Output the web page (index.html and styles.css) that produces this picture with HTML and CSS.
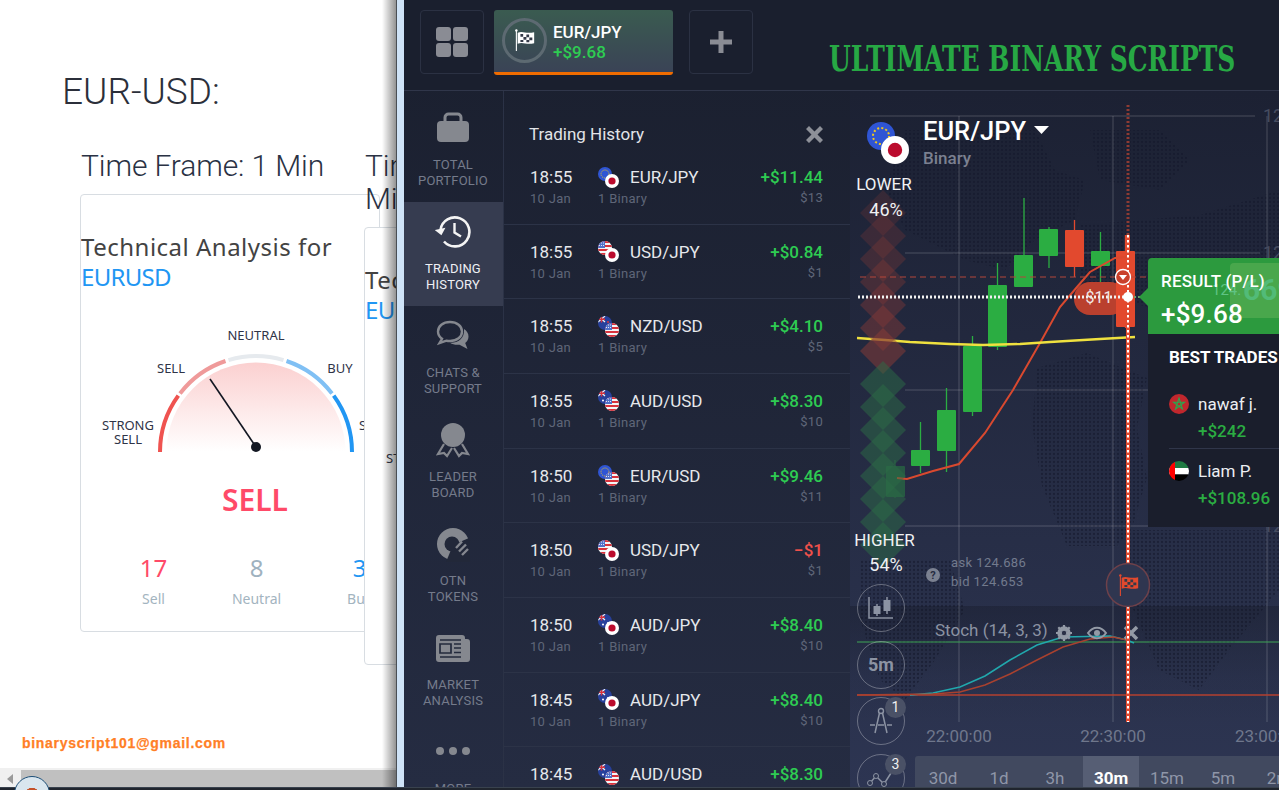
FILE: index.html
```html
<!DOCTYPE html>
<html lang="en">
<head>
<meta charset="utf-8">
<title>Ultimate Binary Scripts</title>
<link rel="stylesheet" href="styles.css">
</head>
<body>
<svg class="defs" width="0" height="0" aria-hidden="true">
  <defs>
    <clipPath id="c14"><circle cx="7" cy="7" r="7"/></clipPath>
    <symbol id="f-eu" viewBox="0 0 14 14"><circle cx="7" cy="7" r="7" fill="#2f55d4"/><circle cx="7" cy="7" r="4" fill="none" stroke="#f2c91d" stroke-width="1" stroke-dasharray="1 1.1"/></symbol>
    <symbol id="f-jp" viewBox="0 0 14 14"><circle cx="7" cy="7" r="7" fill="#fff"/><circle cx="7" cy="7" r="3.6" fill="#bb0b2d"/></symbol>
    <symbol id="f-us" viewBox="0 0 14 14"><g clip-path="url(#c14)"><rect width="14" height="14" fill="#f5f5f5"/><path d="M0 1h14M0 5h14M0 9h14M0 13h14" stroke="#d8323c" stroke-width="2"/><rect width="7" height="7" fill="#5170c8"/><path d="M1 2h5M1 4.500h5" stroke="#dfe6fa" stroke-width="1" stroke-dasharray="1 1"/></g></symbol>
    <symbol id="f-au" viewBox="0 0 14 14"><g clip-path="url(#c14)"><rect width="14" height="14" fill="#27409c"/><path d="M0 0l7 6M7 0L0 6" stroke="#f2f2f2" stroke-width="1.300"/><path d="M3.500 0v6.500M0 3.200h7" stroke="#d8323c" stroke-width="1.400"/><circle cx="10" cy="9" r="1" fill="#fff"/><circle cx="5" cy="10.500" r="1" fill="#fff"/></g></symbol>
    <symbol id="f-nz" viewBox="0 0 14 14"><g clip-path="url(#c14)"><rect width="14" height="14" fill="#27409c"/><path d="M0 0l7 6M7 0L0 6" stroke="#f2f2f2" stroke-width="1.300"/><path d="M3.500 0v6.500M0 3.200h7" stroke="#d8323c" stroke-width="1.400"/><circle cx="10" cy="6" r="1" fill="#d8323c"/><circle cx="11" cy="10" r="1" fill="#d8323c"/></g></symbol>
    <symbol id="flag" viewBox="0 0 24 24">
      <rect x="2" y="1" width="1.200" height="23" fill="currentColor"/>
      <circle cx="2.600" cy="1.500" r="1.300" fill="currentColor"/>
      <path d="M4 4c6-2.500 8 1.500 18-.5v12c-9 2-12-2-18 .5z" fill="currentColor"/>
      <path d="M7 5.500h3v3H7zM13.500 6h3v3h-3zM10.300 8.700h3.200v3h-3.200zM16.700 9.300H20v3h-3.300zM7 12h3.200v2.200H7zM13.500 12h3.200v2.400h-3.200z" fill="#343a48"/>
    </symbol>
    <pattern id="dots" width="4" height="4" patternUnits="userSpaceOnUse"><circle cx="2" cy="2" r="1.150" fill="#12162a"/></pattern>
    <linearGradient id="dome" x1="0" y1="0" x2="0" y2="1"><stop offset="0" stop-color="#fbd0d0"/><stop offset="1" stop-color="#fff"/></linearGradient>
    <linearGradient id="stochBand" x1="0" y1="0" x2="0" y2="1"><stop offset="0" stop-color="#11141f" stop-opacity=".32"/><stop offset=".6" stop-color="#11141f" stop-opacity=".06"/><stop offset="1" stop-color="#11141f" stop-opacity="0"/></linearGradient>
  </defs>
</svg>

<div class="desk">
  <section class="site">
    <h1 class="site-title">EUR-USD:</h1>
    <div class="cols">
      <div class="col col-a">
        <h2 class="frame-title">Time Frame: 1 Min</h2>
        <div class="card">
          <h3 class="card-title">Technical Analysis for <span class="sym">EURUSD</span></h3>
          <svg class="gauge" viewBox="0 0 284 180" width="284" height="180">
            <text class="g-lab" x="175" y="23">NEUTRAL</text>
            <text class="g-lab" x="90" y="56">SELL</text>
            <text class="g-lab" x="259" y="56">BUY</text>
            <text class="g-lab" x="47" y="113">STRONG</text>
            <text class="g-lab" x="47" y="127">SELL</text>
            <text class="g-lab" x="304" y="113">STRONG</text>
            <path class="g-dome" d="M85.500 135a89.500 89.500 0 0 1 179 0z"/>
            <path class="g-arc a1" d="M79 135A96 96 0 0 1 97.300 78.600"/>
            <path class="g-arc a2" d="M99 76.500A96 96 0 0 1 144.500 44"/>
            <path class="g-arc a3" d="M147.500 43.200A96 96 0 0 1 202.500 43.200"/>
            <path class="g-arc a4" d="M205.500 44A96 96 0 0 1 251 76.500"/>
            <path class="g-arc a5" d="M252.700 78.600A96 96 0 0 1 271 135"/>
            <line class="g-needle" x1="175" y1="130" x2="129" y2="62"/>
            <circle class="g-pin" cx="175" cy="130" r="5"/>
          </svg>
          <div class="verdict">SELL</div>
          <div class="tallies">
            <div class="tally"><b class="t-red">17</b><span>Sell</span></div>
            <div class="tally"><b class="t-gray">8</b><span>Neutral</span></div>
            <div class="tally"><b class="t-blue">3</b><span>Buy</span></div>
          </div>
        </div>
      </div>
      <div class="col col-b">
        <h2 class="frame-title">Time Frame: 15 Min</h2>
        <div class="card">
          <h3 class="card-title">Technical Analysis for <span class="sym">EURUSD</span></h3>
          <svg class="gauge" viewBox="0 0 284 180" width="284" height="180">
            <text class="g-lab" x="47" y="113">STRONG</text>
            <text class="g-lab" x="47" y="127">SELL</text>
          </svg>
        </div>
      </div>
    </div>
    <div class="mail">binaryscript101@gmail.com</div>
    <div class="hscroll"><span class="arrow"></span><span class="thumb"></span></div>
  </section>

  <div class="seam"></div>

  <main class="app">
    <header class="topbar">
      <button class="tbtn" aria-label="Layouts">
        <svg width="32" height="30" viewBox="0 0 32 30"><rect x="0" y="0" width="15" height="14" rx="3"/><rect x="17" y="0" width="15" height="14" rx="3"/><rect x="0" y="16" width="15" height="14" rx="3"/><rect x="17" y="16" width="15" height="14" rx="3"/></svg>
      </button>
      <div class="tab">
        <span class="tab-ring"><svg class="tab-flag" width="22" height="22"><use href="#flag"/></svg></span>
        <div class="tab-text"><strong>EUR/JPY</strong><em>+$9.68</em></div>
      </div>
      <button class="tbtn" aria-label="Add">
        <svg width="22" height="22" viewBox="0 0 22 22"><path d="M8.500 0h5v8.500H22v5h-8.500V22h-5v-8.500H0v-5h8.500z"/></svg>
      </button>
      <div class="brand">Ultimate Binary Scripts</div>
    </header>

    <div class="workspace">
      <nav class="rail">
        <a class="rail-item">
          <svg width="34" height="32" viewBox="0 0 34 32"><path d="M9 10V5.500A3.500 3.500 0 0 1 12.500 2h9A3.500 3.500 0 0 1 25 5.500V10" fill="none" stroke="currentColor" stroke-width="3"/><rect x="1" y="9" width="32" height="21" rx="4" fill="currentColor"/></svg>
          <span>Total Portfolio</span>
        </a>
        <a class="rail-item on">
          <svg width="36" height="34" viewBox="0 0 36 34"><path d="M5.500 15A14.500 14.500 0 1 1 9 26.500" fill="none" stroke="currentColor" stroke-width="2.600"/><path d="M0 14h11l-5.500 6.500z" fill="currentColor" transform="rotate(-12 5 16)"/><path d="M19.500 8v9.500l6.500 4" fill="none" stroke="currentColor" stroke-width="2.400"/></svg>
          <span>Trading History</span>
        </a>
        <a class="rail-item">
          <svg width="34" height="32" viewBox="0 0 34 32"><path d="M14 2C7 2 2 6 2 11.500c0 3 1.500 5.500 4 7.300L3.500 23l7-2.300c1 .2 2.300.3 3.500.3 7 0 12-4 12-9.500S21 2 14 2z" fill="none" stroke="currentColor" stroke-width="2.400"/><path d="M28 9c3 2 4.500 4.500 4.500 7.500 0 2.800-1.300 5-3.300 6.500l2.300 6-8-4.300c-3.500.5-7-.3-9.500-2 7 .5 15-3.500 14-13.700z" fill="currentColor"/></svg>
          <span>Chats &amp; Support</span>
        </a>
        <a class="rail-item">
          <svg width="34" height="34" viewBox="0 0 34 34"><circle cx="17" cy="12" r="12" fill="currentColor"/><path d="M8 21l-6 10 6-1 3 3 5-8M26 21l6 10-6-1-3 3-5-8" fill="none" stroke="currentColor" stroke-width="2.200"/></svg>
          <span>Leader Board</span>
        </a>
        <a class="rail-item">
          <svg width="34" height="34" viewBox="0 0 34 34"><circle cx="17" cy="17" r="16" fill="currentColor"/><path d="M17 18L35 10V35H10z" fill="#222839"/><circle cx="16" cy="17" r="7.500" fill="#222839"/><path d="M20 21l6-6.500M23 24.500l7-7M26 28l6-6" stroke="currentColor" stroke-width="2.400"/></svg>
          <span>OTN Tokens</span>
        </a>
        <a class="rail-item">
          <svg width="34" height="28" viewBox="0 0 34 28"><path d="M3 1h23a3 3 0 0 1 3 3v1h2a3 3 0 0 1 3 3v17a3 3 0 0 1-3 3H3a3 3 0 0 1-3-3V4a3 3 0 0 1 3-3z" fill="currentColor"/><path d="M4 6h21M4 10h11v9H4zM18 10h7M18 14h7M18 18.500h7M4 23h21" fill="none" stroke="#232a3d" stroke-width="1.700"/></svg>
          <span>Market Analysis</span>
        </a>
        <a class="rail-item">
          <svg width="34" height="8" viewBox="0 0 34 8" class="more-dots"><circle cx="4" cy="4" r="4" fill="currentColor"/><circle cx="17" cy="4" r="4" fill="currentColor"/><circle cx="30" cy="4" r="4" fill="currentColor"/></svg>
          <span>More</span>
        </a>
      </nav>

      <aside class="history">
        <div class="hist-head"><span>Trading History</span>
          <svg width="17" height="17" viewBox="0 0 17 17"><path d="M3 0l5.500 5.500L14 0l3 3-5.500 5.500L17 14l-3 3-5.500-5.500L3 17l-3-3 5.500-5.500L0 3z" fill="#8d9098"/></svg>
        </div>
        <div class="row"><div class="r-time"><b>18:55</b><small>10 Jan</small></div><div class="r-pair"><div class="r-name"><svg class="pairflag" viewBox="0 0 21 21"><use href="#f-eu" width="14" height="14"/><use href="#f-jp" x="7" y="7" width="14" height="14"/></svg><b>EUR/JPY</b></div><small>1 Binary</small></div><div class="r-amt"><b class="up">+$11.44</b><small>$13</small></div></div>
        <div class="row"><div class="r-time"><b>18:55</b><small>10 Jan</small></div><div class="r-pair"><div class="r-name"><svg class="pairflag" viewBox="0 0 21 21"><use href="#f-us" width="14" height="14"/><use href="#f-jp" x="7" y="7" width="14" height="14"/></svg><b>USD/JPY</b></div><small>1 Binary</small></div><div class="r-amt"><b class="up">+$0.84</b><small>$1</small></div></div>
        <div class="row"><div class="r-time"><b>18:55</b><small>10 Jan</small></div><div class="r-pair"><div class="r-name"><svg class="pairflag" viewBox="0 0 21 21"><use href="#f-nz" width="14" height="14"/><use href="#f-us" x="7" y="7" width="14" height="14"/></svg><b>NZD/USD</b></div><small>1 Binary</small></div><div class="r-amt"><b class="up">+$4.10</b><small>$5</small></div></div>
        <div class="row"><div class="r-time"><b>18:55</b><small>10 Jan</small></div><div class="r-pair"><div class="r-name"><svg class="pairflag" viewBox="0 0 21 21"><use href="#f-au" width="14" height="14"/><use href="#f-us" x="7" y="7" width="14" height="14"/></svg><b>AUD/USD</b></div><small>1 Binary</small></div><div class="r-amt"><b class="up">+$8.30</b><small>$10</small></div></div>
        <div class="row"><div class="r-time"><b>18:50</b><small>10 Jan</small></div><div class="r-pair"><div class="r-name"><svg class="pairflag" viewBox="0 0 21 21"><use href="#f-eu" width="14" height="14"/><use href="#f-us" x="7" y="7" width="14" height="14"/></svg><b>EUR/USD</b></div><small>1 Binary</small></div><div class="r-amt"><b class="up">+$9.46</b><small>$11</small></div></div>
        <div class="row"><div class="r-time"><b>18:50</b><small>10 Jan</small></div><div class="r-pair"><div class="r-name"><svg class="pairflag" viewBox="0 0 21 21"><use href="#f-us" width="14" height="14"/><use href="#f-jp" x="7" y="7" width="14" height="14"/></svg><b>USD/JPY</b></div><small>1 Binary</small></div><div class="r-amt"><b class="down">&minus;$1</b><small>$1</small></div></div>
        <div class="row"><div class="r-time"><b>18:50</b><small>10 Jan</small></div><div class="r-pair"><div class="r-name"><svg class="pairflag" viewBox="0 0 21 21"><use href="#f-au" width="14" height="14"/><use href="#f-jp" x="7" y="7" width="14" height="14"/></svg><b>AUD/JPY</b></div><small>1 Binary</small></div><div class="r-amt"><b class="up">+$8.40</b><small>$10</small></div></div>
        <div class="row"><div class="r-time"><b>18:45</b><small>10 Jan</small></div><div class="r-pair"><div class="r-name"><svg class="pairflag" viewBox="0 0 21 21"><use href="#f-au" width="14" height="14"/><use href="#f-jp" x="7" y="7" width="14" height="14"/></svg><b>AUD/JPY</b></div><small>1 Binary</small></div><div class="r-amt"><b class="up">+$8.40</b><small>$10</small></div></div>
        <div class="row"><div class="r-time"><b>18:45</b><small>10 Jan</small></div><div class="r-pair"><div class="r-name"><svg class="pairflag" viewBox="0 0 21 21"><use href="#f-au" width="14" height="14"/><use href="#f-us" x="7" y="7" width="14" height="14"/></svg><b>AUD/USD</b></div><small>1 Binary</small></div><div class="r-amt"><b class="up">+$8.30</b><small>$10</small></div></div>
      </aside>

      <section class="chart">
        <svg class="plot" viewBox="850 91 429 699" width="429" height="699">
          <!-- world map -->
          <path class="map" fill="url(#dots)" d="M905 130h130l20 40 30 10-10 40-40 20-30 30-40-10-60-30-20-40zM1090 130h70l30 30-30 30-60-10zM1080 225l120-10 80-25v130l-60 10-60-20-80-20zM1037 368l50-15 60 25-10 50 10 50-15 50-15 18h-50l-25-60-10-60zM1130 530h149v60l-50 60-30 40-40-20-30-70zM860 560h90l15 50-30 50-30 40-25-20-20-60z"/>
          <rect x="850" y="606" width="429" height="120" fill="url(#stochBand)"/>
          <!-- grid -->
          <path class="grid" d="M870 116h385M959 116v606M1113 116v606M1267 116v606M905 253h355M905 390h355M905 526h370"/>
          <text class="axis" x="1263" y="122">12</text>
          <text class="axis" x="1263" y="259">12</text>
          <text class="axis" x="1263" y="396">12</text>
          <text class="axis" x="1263" y="532">12</text>
          <!-- candles -->
          <g class="up-c">
            <g class="dim"><path d="M895 460v38"/><rect x="886" y="466" width="19" height="31" rx="1"/></g>
            <path d="M920.500 422v51M946.500 388v84M972.500 336v80M997.500 263v87M1024 198v60M1049 227v41M1100.500 232v50"/>
            <rect x="911" y="450" width="19" height="16" rx="1"/>
            <rect x="937" y="410" width="19" height="41" rx="1"/>
            <rect x="963" y="346" width="19" height="66" rx="1"/>
            <rect x="988" y="285" width="19" height="62" rx="1"/>
            <rect x="1014" y="255" width="19" height="32" rx="1"/>
            <rect x="1039" y="229" width="19" height="27" rx="1"/>
            <rect x="1091" y="251" width="19" height="15" rx="1"/>
          </g>
          <rect class="bubble" x="1074" y="282" width="52" height="33" rx="16"/>
          <g class="down-c">
            <path d="M1074.500 220v57M1125.500 235v93"/>
            <rect x="1065" y="230" width="19" height="37" rx="1"/>
            <rect x="1116" y="251" width="19" height="76" rx="1"/>
          </g>
          <polyline class="ma-red" points="897,478 907,479 933,471 959,464 985,433 1013,390 1040,343 1060,307 1077,287 1090,272 1115,258 1127,257"/>
          <polyline class="ma-yel" points="857,338 885,340 910,342 950,344 983,345 1020,344 1050,342 1100,339 1135,337"/>
          <!-- sentiment diamonds -->
          <g class="dia-red">
            <path style="opacity:.22" d="M883 190l23 23-23 23-23-23z"/><path style="opacity:.26" d="M883 213l23 23-23 23-23-23z"/><path style="opacity:.3" d="M883 236l23 23-23 23-23-23z"/><path style="opacity:.34" d="M883 259l23 23-23 23-23-23z"/><path style="opacity:.38" d="M883 282l23 23-23 23-23-23z"/><path style="opacity:.44" d="M883 305l23 23-23 23-23-23z"/><path style="opacity:.5" d="M883 328l23 23-23 23-23-23z"/>
          </g>
          <g class="dia-green">
            <path d="M883 361l23 23-23 23-23-23z"/><path d="M883 384l23 23-23 23-23-23z"/><path d="M883 407l23 23-23 23-23-23z"/><path d="M883 430l23 23-23 23-23-23z"/><path d="M883 453l23 23-23 23-23-23z"/><path d="M883 476l23 23-23 23-23-23z"/><path d="M883 499l23 23-23 23-23-23z"/><path d="M883 522l23 23-23 23-23-23z"/>
          </g>
          <path class="dash-red" d="M860 277h288"/>
          <path class="dots-w-faint" d="M1130 297h20"/>
          <path class="dots-w" d="M858 297h270"/>
          <!-- expiry line -->
          <path class="exp-top" d="M1128 105v130"/>
          <path class="exp-red" d="M1128 235v487"/>
          <path class="exp-white" d="M1128 235v487"/>
          <circle class="mark" cx="1123" cy="277" r="7.500"/>
          <path fill="#fff" d="M1119 275h8l-4 5z"/>
          <circle cx="1128" cy="297" r="5" fill="#fff"/>
          <text class="bubble-t" x="1099" y="303">$11</text>
          <!-- labels -->
          <text class="pct-l" x="884" y="190">LOWER</text>
          <text class="pct-v" x="886" y="216">46%</text>
          <text class="pct-l" x="884.500" y="546">HIGHER</text>
          <text class="pct-v" x="886" y="571">54%</text>
          <text class="pair-t" x="923" y="140">EUR/JPY</text>
          <path fill="#fff" d="M1034 126h15l-7.500 8z"/>
          <text class="pair-s" x="923" y="164">Binary</text>
          <use href="#f-eu" x="867" y="122" width="28" height="28"/>
          <use href="#f-jp" x="881" y="136" width="28" height="28"/>
          <circle cx="933" cy="575" r="7" fill="#7b8191"/>
          <text class="q" x="933" y="579">?</text>
          <text class="ask" x="951" y="567">ask 124.686</text>
          <text class="ask" x="951" y="586">bid 124.653</text>
          <!-- stochastic -->
          <path class="lvl-g" d="M857 642h422"/>
          <path class="lvl-r" d="M857 695h422"/>
          <polyline class="st-teal" points="910,695 933,693 960,687 985,676 1010,660 1037,645 1063,637 1110,636 1127,640 1134,643"/>
          <polyline class="st-red" points="857,695 933,694 960,692 985,685 1010,674 1037,660 1063,647 1090,639 1113,637 1127,640"/>
          <text class="st-t" x="935" y="636">Stoch (14, 3, 3)</text>
          <g class="st-ic">
            <circle cx="1064" cy="633" r="5" fill="none" stroke="#939aa6" stroke-width="3.500"/>
            <path d="M1064 625v16M1056 633h16M1058.300 627.300l11.400 11.400M1069.700 627.300l-11.400 11.400" stroke="#939aa6" stroke-width="2.200"/>
            <circle cx="1064" cy="633" r="2.200" fill="#2a3046"/>
            <path d="M1088 633c5-7 13-7 18 0-5 7-13 7-18 0z" fill="none" stroke="#939aa6" stroke-width="2"/>
            <circle cx="1097" cy="633" r="3" fill="#939aa6"/>
            <path d="M1125 627l12 12M1137 627l-12 12" stroke="#939aa6" stroke-width="3.500"/>
          </g>
          <path class="exp-red" d="M1128 606v116"/>
          <path class="exp-white" d="M1128 606v116"/>
          <circle class="flagball" cx="1128" cy="585" r="21.500"/>
          <use href="#flag" class="redflag" x="1118" y="574" width="22" height="22"/>
          <text class="tick" x="959" y="742">22:00:00</text>
          <text class="tick" x="1113" y="742">22:30:00</text>
          <text class="tick tick-s" x="1235" y="742">23:00:00</text>
        </svg>

        <div class="tools">
          <button class="tool" aria-label="Chart type"><svg width="26" height="24" viewBox="0 0 26 24"><path d="M1 1v21h24" fill="none" stroke="currentColor" stroke-width="1.500"/><path d="M9 8v12M19 1v17" stroke="currentColor" stroke-width="1.500"/><rect x="5.500" y="10" width="7" height="8" fill="currentColor"/><rect x="15.500" y="4" width="7" height="11" fill="currentColor"/></svg></button>
          <button class="tool tool-t">5m</button>
          <button class="tool" aria-label="Tools"><svg width="22" height="28" viewBox="0 0 22 28"><circle cx="11" cy="4" r="2.500" fill="none" stroke="currentColor" stroke-width="1.400"/><path d="M9.500 6L5 26M12.500 6L17 26M0 18h5M8 18h6M17 18h5" fill="none" stroke="currentColor" stroke-width="1.500"/></svg><span class="badge">1</span></button>
          <button class="tool" aria-label="Indicators"><svg width="28" height="20" viewBox="0 0 28 20"><path d="M3 15l6-7 8 8 7-11" fill="none" stroke="currentColor" stroke-width="1.500"/><circle cx="3" cy="15" r="2.500" fill="#2d3550" stroke="currentColor"/><circle cx="9" cy="8" r="2.500" fill="#2d3550" stroke="currentColor"/><circle cx="17" cy="16" r="2.500" fill="#2d3550" stroke="currentColor"/></svg><span class="badge">3</span></button>
        </div>

        <div class="side-card">
          <div class="result">
            <span class="result-tip"></span>
            <div class="ghost"><span class="g1">124.</span><span class="g2">669</span></div>
            <div class="r-lab">RESULT (P/L)</div>
            <div class="r-val">+$9.68</div>
          </div>
          <div class="best">
            <div class="best-h">BEST TRADES</div>
            <div class="trader">
              <div class="trader-top"><svg width="20" height="20" viewBox="0 0 20 20"><circle cx="10" cy="10" r="10" fill="#c1272d"/><path d="M10 4l3.500 11L4.500 8.200h11L6.500 15z" fill="none" stroke="#2aa84f" stroke-width="1.100"/></svg><span>nawaf j.</span></div>
              <b>+$242</b>
            </div>
            <div class="trader">
              <div class="trader-top"><svg width="20" height="20" viewBox="0 0 20 20"><defs><clipPath id="cu"><circle cx="10" cy="10" r="10"/></clipPath></defs><g clip-path="url(#cu)"><rect width="20" height="7" fill="#1f7a43"/><rect y="7" width="20" height="6.500" fill="#fff"/><rect y="13.500" width="20" height="6.500" fill="#000"/><rect width="6" height="20" fill="#f00"/></g></svg><span>Liam P.</span></div>
              <b>+$108.96</b>
            </div>
          </div>
        </div>

        <div class="frames">
          <span>30d</span><span>1d</span><span>3h</span><span class="cur">30m</span><span>15m</span><span>5m</span><span>2m</span>
        </div>
      </section>
    </div>
  </main>
</div>
<footer class="taskbar"><span class="orb"></span></footer>
</body>
</html>
```

FILE: styles.css
```css
* { box-sizing: border-box; }
html, body { margin: 0; height: 100%; overflow: hidden; }
body { display: flex; flex-direction: column; background: #1a2030; font-family: Roboto, "Liberation Sans", sans-serif; }
.defs { position: absolute; }
button { font: inherit; padding: 0; background: none; color: inherit; }

.desk { flex: 1; min-height: 0; display: flex; }
.taskbar { height: 3px; background: #20252e; border-top: 1px solid #39424e; position: relative; }
.orb { position: absolute; left: 14px; top: -12px; width: 36px; height: 36px; border-radius: 50%; background: radial-gradient(circle at 50% 55%, #c4512a 0 30%, #d9e6ef 32% 100%); border: 1px solid #1d4f78; }

/* left: web page */
.site { width: 396px; flex: none; background: #fff; position: relative; overflow: hidden; display: flex; flex-direction: column; }
.site::after { content: ""; position: absolute; right: 0; top: 0; bottom: 0; width: 14px; background: linear-gradient(to right, rgba(0,0,0,0), rgba(0,0,0,.42)); pointer-events: none; }
.site-title { margin: 71px 0 0 62px; font: 300 37px/42px Roboto, sans-serif; color: #2b2f3a; white-space: nowrap; }
.cols { display: flex; margin: 36px 0 0 80px; align-items: flex-start; }
.col { flex: none; }
.col-a { width: 284px; }
.col-b { width: 250px; position: relative; }
.frame-title { margin: 0 0 0 1px; font: 300 30px/33px Roboto, sans-serif; letter-spacing: -.12px; color: #2a3244; }
.col-a .frame-title { white-space: nowrap; }
.frame-title + .card { margin-top: 12px; }
.card { border: 1px solid #d8dde2; border-radius: 4px; background: #fff; height: 438px; width: 300px; padding-top: 37px; }
.col-b .card { width: 284px; }
.card-title { margin: 0; font: 400 24px/30px "Noto Sans", sans-serif; letter-spacing: .5px; color: #434343; width: 280px; }
.sym { color: #2196f3; display: inline-block; letter-spacing: -.7px; }
.gauge { display: block; overflow: visible; margin-top: 25px; }
.g-lab { font: 400 13px "Noto Sans", sans-serif; fill: #2f3447; text-anchor: middle; }
.g-dome { fill: url(#dome); }
.g-arc { fill: none; stroke-width: 4; }
.a1 { stroke: #ef5350; } .a2 { stroke: #ef9a9a; } .a3 { stroke: #e6eaee; } .a4 { stroke: #80c0f4; } .a5 { stroke: #2196f3; }
.g-needle { stroke: #131722; stroke-width: 1.600; }
.g-pin { fill: #131722; }
.verdict { margin-top: -14px; width: 348px; text-align: center; font: 600 30px/34px "Noto Sans", sans-serif; color: #ff4a68; }
.tallies { position: relative; margin-top: 36px; display: flex; padding-left: 21px; width: 340px; }
.tally { width: 103px; flex: none; text-align: center; display: flex; flex-direction: column; gap: 6px; }
.tally b { font: 400 24px/30px "Noto Sans", sans-serif; }
.tally span { font: 400 14px/20px "Noto Sans", sans-serif; color: #a3b4c0; }
.t-red { color: #ff4a68; } .t-gray { color: #9fb2bf; } .t-blue { color: #2196f3; }
.col-a .card { overflow: hidden; }
.mail { margin: auto 0 15px 22px; font: 700 14px/20px "Liberation Sans", sans-serif; letter-spacing: .7px; color: #ff7f27; -webkit-text-stroke: .25px #ff7f27; }
.hscroll { height: 19px; flex: none; display: flex; background: #f0f0f0; padding-top: 2px; }
.arrow { width: 21px; position: relative; }
.arrow::before { content: ""; position: absolute; left: 7px; top: 4px; border: 5px solid transparent; border-right: 6px solid #9a9a9a; border-left: 0; }
.thumb { flex: 1; background: #c0c0c0; }

.seam { width: 8px; flex: none; background: linear-gradient(to right, #4a4f55 0 1px, #cfe3f7 1px 100%); }

/* right: trading app */
.app { flex: 1; min-width: 0; display: flex; flex-direction: column; background: linear-gradient(#1a1f2e, #252c42); color: #fff; }
.topbar { height: 91px; flex: none; display: flex; align-items: flex-start; padding: 10px 0 0 16px; border-bottom: 1px solid #30364a; background: #1a1f2e; }
.tbtn { width: 64px; height: 64px; flex: none; border: 1px solid #2b3143; border-radius: 4px; display: flex; align-items: center; justify-content: center; fill: #8a8c94; }
.tab { width: 179px; height: 65px; margin: 0 16px 0 10px; flex: none; border-radius: 3px; border-bottom: 3px solid #f06c00; background: linear-gradient(#3a5b50, #3a4356); display: flex; align-items: center; padding: 0 0 2px 8px; }
.tab-ring { width: 45px; height: 45px; border-radius: 50%; border: 3px solid #5d6a72; display: flex; align-items: center; justify-content: center; color: #fff; flex: none; }
.tab-text { margin-left: 6px; padding-top: 4px; display: flex; flex-direction: column; }
.tab-text strong { font: 500 17px/20px Roboto, sans-serif; }
.tab-text em { font: 500 17px/20px Roboto, sans-serif; color: #2ecc52; }
.brand { flex: none; margin: 32px 0 0 76px; width: 405px; font: 700 36px/32px "DejaVu Serif", serif; color: #27a844; white-space: nowrap; text-transform: uppercase; transform: scaleX(.693); transform-origin: left center; }

.workspace { flex: 1; min-height: 0; display: flex; }
.rail { width: 100px; flex: none; padding-top: 7px; border-right: 1px solid #2b3246; overflow: hidden; }
.rail-item { height: 104px; padding-right: 1px; display: flex; flex-direction: column; align-items: center; color: #85888f; }
.rail-item svg { height: 40px; margin-top: 10px; flex: none; }
.rail-item svg.more-dots { height: 8px; margin-top: 25px; margin-bottom: 17px; }
.rail-item span { margin-top: 9px; width: 74px; text-align: center; font: 400 13px/16px Roboto, sans-serif; text-transform: uppercase; letter-spacing: .2px; color: #757b8b; }
.rail-item.on { background: #363c50; color: #f4f4f4; }
.rail-item.on span { color: #eef0f4; }

.history { width: 346px; flex: none; overflow: hidden; }
.hist-head { height: 59px; padding: 33px 27px 0 25px; display: flex; justify-content: space-between; align-items: flex-start; font: 400 17px/20px Roboto, sans-serif; color: #e2e4e8; }
.hist-head svg { margin-top: 2px; }
.row { height: 74.670px; display: flex; padding: 17px 26px 0; border-bottom: 1px solid #2c3347; }
.row small { display: block; font: 400 13px/16px Roboto, sans-serif; color: #5f6678; margin-top: 4px; letter-spacing: .3px; }
.row b { font-weight: 400; }
.r-time { width: 68px; flex: none; }
.r-time b { display: block; font-size: 17px; line-height: 20px; color: #e6e8ec; }
.r-pair { flex: 1; }
.r-name { height: 20px; display: flex; align-items: center; gap: 11px; font-size: 17px; color: #e6e8ec; }
.pairflag { width: 21px; height: 21px; flex: none; }
.r-amt { text-align: right; margin-right: 1px; }
.r-amt b { display: block; font: 500 17px/20px Roboto, sans-serif; }
.r-amt small { margin-top: 3px; }
.up { color: #2ecc52; } .down { color: #f0514b; }

.chart { flex: 1; min-width: 0; position: relative; overflow: hidden; background: linear-gradient(#1c2133, #2d3552); }
.plot { display: block; position: absolute; left: 0; top: 0; }
.map { opacity: .55; }
.grid { fill: none; stroke: rgba(255,255,255,.2); stroke-width: 1; }
.axis { font: 400 18px Roboto, sans-serif; fill: #464c60; }
.up-c { fill: #2bad42; stroke: none; }
.up-c path { stroke: #2bad42; stroke-width: 1.300; fill: none; }
.dim { opacity: .35; }
.down-c { fill: #e2492e; }
.down-c path { stroke: #e2492e; stroke-width: 1.300; fill: none; }
.bubble { fill: #ba402e; }
.bubble-t { font: 400 16px Roboto, sans-serif; fill: #f1e6e4; text-anchor: middle; }
.ma-red { fill: none; stroke: #d9492f; stroke-width: 2; }
.ma-yel { fill: none; stroke: #efe13f; stroke-width: 2.400; }
.dia-red path { fill: #8c3b36; }
.dia-green path { fill: #2c6b45; opacity: .5; }
.dash-red { fill: none; stroke: #b5463a; stroke-width: 1; stroke-dasharray: 6 4; }
.dots-w { fill: none; stroke: #f1f1f1; stroke-width: 3; stroke-dasharray: 2 2; }
.dots-w-faint { fill: none; stroke: #6f9b6a; stroke-width: 2; stroke-dasharray: 2 2; }
.exp-top { stroke: #8e3b33; stroke-width: 3; stroke-dasharray: 2 2; }
.exp-red { stroke: #e2492e; stroke-width: 4; }
.exp-white { stroke: #fff; stroke-width: 2; stroke-dasharray: 2.500 2.500; }
.mark { fill: #c9402b; stroke: #fff; stroke-width: 1.300; }
.pct-l { font: 400 17px Roboto, sans-serif; fill: #f0f1f3; text-anchor: middle; }
.pct-v { font: 400 18px Roboto, sans-serif; fill: #f0f1f3; text-anchor: middle; }
.pair-t { font: 500 25.500px Roboto, sans-serif; fill: #fff; }
.pair-s { font: 500 17px Roboto, sans-serif; fill: #7b8090; }
.q { font: 700 11px Roboto, sans-serif; fill: #262c40; text-anchor: middle; }
.ask { font: 400 13px Roboto, sans-serif; fill: #727a8d; letter-spacing: .4px; }
.lvl-g { stroke: #3fa657; stroke-width: 1.200; }
.lvl-r { stroke: #b5402f; stroke-width: 1.500; }
.st-teal { fill: none; stroke: #21a8ad; stroke-width: 1.500; }
.st-red { fill: none; stroke: #a8412f; stroke-width: 1.500; }
.st-t { font: 400 17px Roboto, sans-serif; fill: #8b92a2; }
.flagball { fill: #2f3650; stroke: #6e414a; stroke-width: 1.500; }
.redflag { color: #e2492e; }
.tick { font: 400 17px Roboto, sans-serif; fill: #6f778c; text-anchor: middle; }
.tick-s { text-anchor: start; }

.tools { position: absolute; left: 7px; top: 493px; display: flex; flex-direction: column; gap: 8.500px; }
.tool { position: relative; width: 48px; height: 48px; flex: none; border-radius: 50%; border: 1px solid rgba(255,255,255,.3); color: #8c93a3; display: flex; align-items: center; justify-content: center; }
.tool-t { font: 700 18px Roboto, sans-serif; color: #8c93a3; }
.badge { position: absolute; right: -2px; top: -1px; width: 21px; height: 21px; border-radius: 50%; background: #4a5166; color: #f0f0f0; font: 400 14px/21px Roboto, sans-serif; text-align: center; }

.side-card { position: absolute; left: 298px; top: 167px; width: 131px; display: flex; flex-direction: column; }
.result { position: relative; height: 76px; background: #2c9a3e; border-radius: 4px 0 0 0; padding: 13px 0 0 13px; }
.result-tip { position: absolute; left: -9px; top: 30px; border: 9px solid transparent; border-right: 9px solid #2c9a3e; border-left: 0; }
.ghost { position: absolute; left: 82px; top: 5px; right: 0; height: 55px; background: rgba(120,190,100,.38); border-radius: 4px 0 0 0; white-space: nowrap; padding-top: 9px; line-height: 36px; }
.g1 { position: relative; left: -18px; font: 400 15px/36px Roboto, sans-serif; color: #5fc384; }
.g2 { position: absolute; left: 13px; top: 9px; font: 700 30px/36px Roboto, sans-serif; color: #52bb78; width: 36px; overflow: hidden; }
.r-lab { position: relative; font: 500 17px/20px Roboto, sans-serif; letter-spacing: .2px; white-space: nowrap; }
.r-val { position: relative; font: 500 26px/32px Roboto, sans-serif; margin-top: 7px; letter-spacing: .2px; }
.best { height: 193px; background: #1a1e2c; padding: 13px 0 0 21px; }
.best-h { font: 700 17px/20px Roboto, sans-serif; white-space: nowrap; margin-bottom: 14px; }
.trader { height: 67px; padding-top: 13px; }
.trader + .trader { border-top: 1px solid #30364a; }
.trader:first-of-type { border: 0; }
.trader + .trader { padding-top: 12px; }
.trader-top { display: flex; align-items: center; gap: 9px; font: 400 17px/20px Roboto, sans-serif; color: #eceef2; }
.trader b { display: block; margin: 7px 0 0 29px; font: 500 17px/20px Roboto, sans-serif; color: #2bad42; white-space: nowrap; }

.frames { position: absolute; left: 65px; top: 665px; height: 32px; width: 364px; display: flex; background: #41495f; border-radius: 3px 0 0 0; overflow: hidden; }
.frames span { width: 56px; flex: none; text-align: center; font: 400 17px/44px Roboto, sans-serif; color: #8f96a8; }
.frames .cur { background: #565e74; color: #fff; font-weight: 700; }
```
